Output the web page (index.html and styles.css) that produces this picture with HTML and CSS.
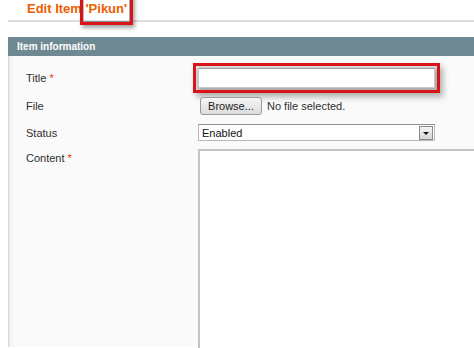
FILE: index.html
```html
<!DOCTYPE html>
<html lang="en">

<head>
  <meta charset="UTF-8">
  <meta name="viewport" content="width=device-width, initial-scale=1.0">
  <title>Edit Item</title>
  <link rel="stylesheet" href="styles.css">
</head>

<body>
  <div class="content-header">
    <h3 class="head-title">Edit Item <span class="marked">'Pikun'</span></h3>
  </div>

  <div class="entry-edit">
    <div class="section-head">Item information</div>
    <div class="fieldset">
      <div class="form-grid">
        <label class="field-label" for="title">Title <span class="required">*</span></label>
        <div class="field-value">
          <input id="title" class="input-text marked-input" type="text">
        </div>

        <label class="field-label">File</label>
        <div class="field-value">
          <span class="file-button">Browse...</span>
          <span class="file-note">No file selected.</span>
        </div>

        <label class="field-label">Status</label>
        <div class="field-value">
          <div class="select">
            <span class="select-text">Enabled</span>
            <span class="select-arrow"></span>
          </div>
        </div>

        <label class="field-label label-top" for="content">Content <span class="required">*</span></label>
        <div class="field-value">
          <textarea id="content" class="textarea"></textarea>
        </div>
      </div>
    </div>
  </div>
</body>

</html>
```

FILE: styles.css
```css
body {
  margin: 0;
  font-family: "Liberation Sans", Arial, sans-serif;
  background-color: #ffffff;
  overflow: hidden;
  height: 348px;
}

.content-header {
  margin-left: 8px;
  height: 20px;
  border-bottom: 2px solid #dedede;
}

.head-title {
  margin: 0;
  padding-left: 19px;
  font-size: 13px;
  line-height: 17px;
  font-weight: bold;
  color: #eb5e00;
}

.marked {
  padding: 4px 2px 5px;
  margin: 0 -2px;
  outline: 3px solid #d8141a;
  outline-offset: 1px;
  box-shadow: 2px 3px 4px 4px rgba(0, 0, 0, 0.35);
}

.entry-edit {
  margin-top: 15px;
  margin-left: 8px;
}

.section-head {
  height: 19px;
  line-height: 19px;
  padding-left: 9px;
  background-color: #6f8992;
  color: #ffffff;
  font-size: 10px;
  font-weight: bold;
}

.fieldset {
  background-color: #fafafa;
  border-left: 1px solid #d8d8d8;
  box-shadow: inset 4px 0 3px -2px #eeeeee;
  padding-top: 12px;
  height: 279px;
}

.form-grid {
  display: grid;
  grid-template-columns: 189px 1fr;
  grid-template-rows: 20px 20px 17px auto;
  row-gap: 8px;
}

.field-label {
  padding-left: 17px;
  font-size: 11px;
  color: #2f2f2f;
  display: flex;
  align-items: center;
}

.label-top {
  align-items: flex-start;
  padding-top: 3px;
}

.required {
  color: #eb340a;
  margin-left: 3px;
}

.field-value {
  display: flex;
  align-items: center;
}

.input-text {
  box-sizing: border-box;
  width: 237px;
  height: 20px;
  margin: 0;
  border: 1px solid #c8c8c8;
  border-top-color: #9a9a9a;
  background-color: #ffffff;
}

.marked-input {
  outline: 3px solid #d8141a;
  outline-offset: 2px;
  box-shadow: 0 0 0 5px transparent, 3px 4px 6px 5px rgba(0, 0, 0, 0.3);
}

.file-button {
  box-sizing: border-box;
  margin-left: 2px;
  width: 62px;
  height: 18px;
  line-height: 16px;
  text-align: center;
  font-size: 11px;
  color: #222222;
  border: 1px solid #9a9a9a;
  border-radius: 3px;
  background: linear-gradient(#f6f6f6, #dcdcdc);
}

.file-note {
  margin-left: 5px;
  font-size: 11px;
  color: #2f2f2f;
}

.select {
  box-sizing: border-box;
  width: 237px;
  height: 17px;
  display: flex;
  align-items: center;
  justify-content: space-between;
  border: 1px solid #b8b8b8;
  border-top-color: #8f8f8f;
  background-color: #ffffff;
}

.select-text {
  padding-left: 3px;
  font-size: 11px;
  color: #111111;
}

.select-arrow {
  box-sizing: border-box;
  width: 14px;
  height: 14px;
  margin-right: 1px;
  border: 1px solid #8a8a8a;
  background: linear-gradient(#f4f4f4, #d6d6d6);
  position: relative;
}

.select-arrow::after {
  content: "";
  position: absolute;
  left: 3px;
  top: 5px;
  border-left: 3px solid transparent;
  border-right: 3px solid transparent;
  border-top: 3px solid #111111;
}

.textarea {
  box-sizing: border-box;
  width: 276px;
  height: 199px;
  margin: 0;
  resize: none;
  border: none;
  border-top: 2px solid #c4c4c4;
  border-left: 2px solid #c4c4c4;
  background-color: #ffffff;
  align-self: flex-start;
}
```
